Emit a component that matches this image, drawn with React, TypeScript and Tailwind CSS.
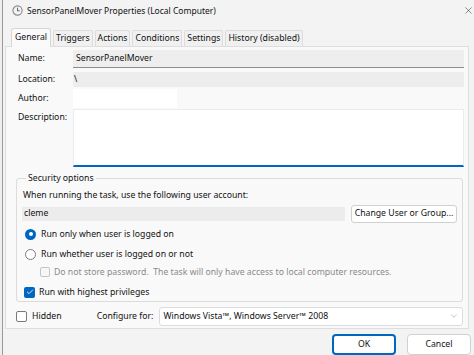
import { Check, ChevronDown, X } from 'lucide-react';

const font = { fontFamily: '"Noto Sans", "Open Sans", sans-serif' };

const tabs = ['Triggers', 'Actions', 'Conditions', 'Settings', 'History (disabled)'];

export default function App() {
  return (
    <div
      className="w-[474px] h-[355px] overflow-hidden bg-[#f3f3f3] text-[8.7px] leading-none text-[#111] flex"
      style={font}
    >
      <div className="w-[3px] border-r border-[#9a9a9a] bg-[#eeeeee]" />
      <div className="flex-1 flex flex-col">
        {/* title bar */}
        <div className="h-[22px] flex items-center pl-[6px]">
          <svg width="11" height="11" viewBox="0 0 12 12" className="mr-[4px] ml-[3px]">
            <circle cx="6" cy="6" r="5" fill="#f4f4f4" stroke="#8a8a8a" strokeWidth="1.2" />
            <path d="M6 3v3.2h2.4" fill="none" stroke="#6a6a6a" strokeWidth="1.1" />
          </svg>
          <span className="text-[8.5px]">SensorPanelMover Properties (Local Computer)</span>
          <X className="ml-auto text-[#333]" size={11} strokeWidth={1.2} />
        </div>

        {/* tabs */}
        <div className="h-[24px] flex items-end pl-[8px] gap-[2px]">
          <div className="h-[19px] px-[3px] flex items-center bg-[#fafafa] border border-b-0 border-[#d6d6d6] rounded-t-[3px] relative top-[1px]">
            General
          </div>
          {tabs.map((t) => (
            <div
              key={t}
              className="h-[16px] px-[2px] flex items-center bg-[#f0f0f0] border border-b-0 border-[#dcdcdc] rounded-t-[2px]"
            >
              {t}
            </div>
          ))}
        </div>

        {/* page */}
        <div className="mx-[2px] w-[464px] h-[285px] bg-[#f9f9f9] border border-[#dedede] pt-[3px] pl-[12px] pr-[4px]">
          <div className="flex h-[18px] items-stretch">
            <div className="w-[55px] flex items-center">Name:</div>
            <div className="flex-1 bg-[#eeeeee] border-b border-[#8c8c8c] flex items-center pl-[3px]">
              SensorPanelMover
            </div>
          </div>
          <div className="flex h-[15px] mt-[4px] items-stretch">
            <div className="w-[55px] flex items-center">Location:</div>
            <div className="flex-1 bg-[#ededed] flex items-center pl-[1px]">\</div>
          </div>
          <div className="flex h-[19px] mt-[2px] items-stretch">
            <div className="w-[55px] flex items-center">Author:</div>
            <div className="w-[104px] bg-white" />
          </div>
          <div className="flex h-[58px] mt-[1px] items-stretch">
            <div className="w-[55px] pt-[4px]">Description:</div>
            <div className="flex-1 bg-white border border-[#ececec] border-b-2 border-b-[#0067c0]" />
          </div>

          {/* security options */}
          <fieldset className="mt-[7px] ml-[-2px] w-[447px] h-[128px] border border-[#dcdcdc] rounded-[3px] pl-[6px] pr-[4px]">
            <legend className="px-[2px] ml-[3px]">Security options</legend>
            <div className="mt-[9px]">When running the task, use the following user account:</div>
            <div className="flex items-center mt-[4px] h-[19px]">
              <div className="w-[323px] h-[14px] bg-[#ececec] flex items-center pl-[2px] ml-[-1px]">cleme</div>
              <button className="ml-[6px] w-[106px] h-[18px] bg-white border border-[#d0d0d0] rounded-[3px] text-[8.7px] leading-none flex items-center justify-center">
                Change User or Group...
              </button>
            </div>
            <div className="flex items-center mt-[4px] h-[14px] ml-[2px]">
              <span className="w-[11px] h-[11px] rounded-full bg-[#0067c0] flex items-center justify-center">
                <span className="w-[4px] h-[4px] rounded-full bg-white" />
              </span>
              <span className="ml-[5px]">Run only when user is logged on</span>
            </div>
            <div className="flex items-center mt-[6px] h-[14px] ml-[2px]">
              <span className="w-[11px] h-[11px] rounded-full border border-[#7a7a7a] bg-white" />
              <span className="ml-[5px]">Run whether user is logged on or not</span>
            </div>
            <div className="flex items-center mt-[4px] h-[14px] ml-[17px] text-[#8a8a8a]">
              <span className="w-[10px] h-[10px] rounded-[2px] border border-[#c4c4c4] bg-[#f7f7f7]" />
              <span className="ml-[4px]">
                Do not store password.&nbsp; The task will only have access to local computer resources.
              </span>
            </div>
            <div className="flex items-center mt-[6px] h-[14px] ml-[1px]">
              <span className="w-[11px] h-[11px] rounded-[2px] bg-[#0067c0] flex items-center justify-center">
                <Check size={8} strokeWidth={2.5} className="text-white" />
              </span>
              <span className="ml-[4px]">Run with highest privileges</span>
            </div>
          </fieldset>

          {/* bottom row */}
          <div className="flex items-center mt-[5px] h-[19px]">
            <span className="w-[11px] h-[11px] rounded-[2px] border border-[#7a7a7a] bg-white ml-[-2px]" />
            <span className="ml-[5px]">Hidden</span>
            <span className="ml-[35px]">Configure for:</span>
            <div className="ml-[6px] w-[304px] h-[19px] bg-white border border-[#dcdcdc] rounded-[3px] flex items-center pl-[3px] pr-[3px]">
              <span>Windows Vista™, Windows Server™ 2008</span>
              <ChevronDown size={10} strokeWidth={1.2} className="ml-auto text-[#888]" />
            </div>
          </div>
        </div>

        {/* dialog buttons */}
        <div className="flex justify-end gap-[11px] mt-[5px] pr-[3px]">
          <button className="w-[64px] h-[21px] bg-white border-2 border-[#0067c0] rounded-[4px] text-[8.7px] leading-none">
            OK
          </button>
          <button className="w-[64px] h-[21px] bg-white border border-[#d0d0d0] rounded-[4px] text-[8.7px] leading-none">
            Cancel
          </button>
        </div>
      </div>
    </div>
  );
}
